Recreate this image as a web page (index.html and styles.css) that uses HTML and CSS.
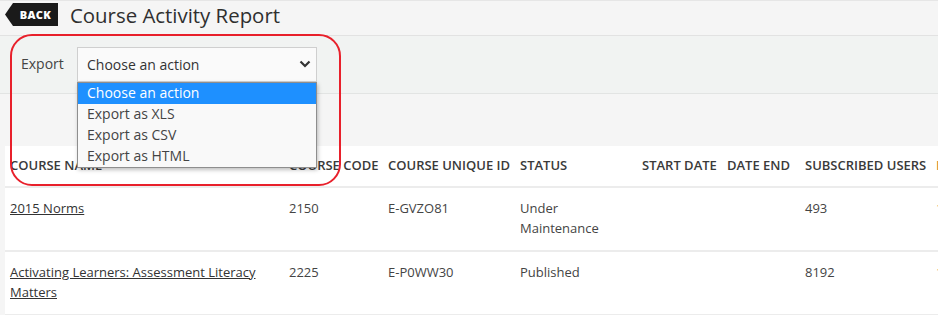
FILE: index.html
```html
<!DOCTYPE html>
<html>
<head>
<meta charset="utf-8">
<link rel="stylesheet" href="styles.css">
</head>
<body>
<div class="page">
  <header class="topbar">
    <a class="back">BACK</a>
    <h1 class="title">Course Activity Report</h1>
  </header>
  <div class="filters">
    <label class="flabel">Export</label>
    <div class="select">
      <span>Choose an action</span>
      <svg class="chev" width="12" height="8" viewBox="0 0 12 8"><path d="M1.5 1.5 L6 6 L10.5 1.5" fill="none" stroke="#333" stroke-width="2.2"/></svg>
      <ul class="menu">
        <li class="active">Choose an action</li>
        <li>Export as XLS</li>
        <li>Export as CSV</li>
        <li>Export as HTML</li>
      </ul>
    </div>
  </div>
  <div class="spacer"></div>
  <div class="card">
    <table class="report">
      <colgroup>
        <col class="c1"><col class="c2"><col class="c3"><col class="c4"><col class="c5"><col class="c6"><col class="c7"><col class="c8">
      </colgroup>
      <thead>
        <tr><th>Course Name</th><th>Course Code</th><th>Course Unique ID</th><th>Status</th><th>Start Date</th><th>Date End</th><th>Subscribed Users</th><th class="cut">Progress</th></tr>
      </thead>
      <tbody>
        <tr><td><a href="#">2015 Norms</a></td><td>2150</td><td>E-GVZO81</td><td>Under Maintenance</td><td></td><td></td><td>493</td><td class="cut">1</td></tr>
        <tr><td><a href="#">Activating Learners: Assessment Literacy Matters</a></td><td>2225</td><td>E-P0WW30</td><td>Published</td><td></td><td></td><td>8192</td><td class="cut">1</td></tr>
      </tbody>
    </table>
  </div>
  <div class="highlight"></div>
</div>
</body>
</html>
```

FILE: styles.css
```css
html, body {
  margin: 0;
  padding: 0;
  background: #f5f5f5;
  overflow: hidden;
  font-family: "Open Sans", "Noto Sans", sans-serif;
  color: #333;
}
.page {
  position: relative;
  width: 938px;
  height: 315px;
}
.topbar {
  border-top: 1px solid #e6e6e6;
  border-bottom: 1px solid #e2e2e2;
  display: flex;
  align-items: flex-start;
  box-sizing: border-box;
  height: 36px;
  padding-top: 2px;
}
.back {
  margin-left: 5px;
  width: 53px;
  height: 23px;
  background: #1a1a1a;
  color: #fff;
  font-weight: 800;
  font-size: 11px;
  letter-spacing: 0.3px;
  display: flex;
  align-items: center;
  justify-content: flex-end;
  padding-right: 7px;
  box-sizing: border-box;
  clip-path: polygon(8px 0, 100% 0, 100% 100%, 8px 100%, 0 50%);
}
.title {
  margin: -1px 0 0 12px;
  font-size: 20.4px;
  font-weight: 400;
  line-height: 26px;
  color: #2f2f2f;
}
.filters {
  background: #f1f3f2;
  border-bottom: 1px solid #e2e4e3;
  display: flex;
  align-items: flex-start;
  padding-top: 11px;
  box-sizing: border-box;
  height: 58px;
}
.flabel {
  margin-left: 21px;
  margin-top: 7px;
  font-size: 14px;
  color: #444;
  width: 56px;
}
.select {
  position: relative;
  width: 240px;
  height: 35px;
  box-sizing: border-box;
  border: 1px solid #cfcfcf;
  background: #fafafa;
  display: flex;
  align-items: center;
  padding-left: 9px;
  padding-bottom: 1px;
  font-size: 14px;
  color: #333;
}
.chev {
  position: absolute;
  right: 5px;
  top: 12px;
}
.menu {
  position: absolute;
  left: -1px;
  top: 34px;
  width: 240px;
  margin: 0;
  padding: 0;
  list-style: none;
  background: #f9f9f9;
  border: 1px solid #8e8e8e;
  box-sizing: border-box;
  box-shadow: 1px 2px 4px rgba(0,0,0,0.25);
  z-index: 2;
}
.menu li {
  height: 21px;
  line-height: 20px;
  padding-left: 9px;
  font-size: 14px;
  color: #444;
}
.menu li.active {
  background: #1e90ff;
  color: #fff;
}
.spacer {
  height: 52px;
}
.card {
  margin-left: 5px;
  background: #fff;
  height: 180px;
  overflow: hidden;
}
.report {
  table-layout: fixed;
  border-collapse: collapse;
  width: 1040px;
  font-size: 13px;
}
.c1 { width: 279px; }
.c2 { width: 99px; }
.c3 { width: 132px; }
.c4 { width: 122px; }
.c5 { width: 85px; }
.c6 { width: 78px; }
.c7 { width: 131px; }
.c8 { width: 114px; }
.report th {
  text-align: left;
  text-transform: uppercase;
  font-weight: 600;
  color: #3a3a3a;
  height: 38px;
  padding: 0 5px 2px;
  vertical-align: middle;
  border-bottom: 2px solid #ececec;
  white-space: nowrap;
}
.report td {
  vertical-align: top;
  padding: 10px 5px 11px;
  line-height: 20px;
  height: 41px;
  color: #444;
  border-bottom: 2px solid #ececec;
}
.report td a {
  color: #333;
  text-decoration: underline;
}
.report .cut {
  color: #d08a40;
}
.highlight {
  position: absolute;
  left: 10px;
  top: 34px;
  width: 331px;
  height: 152px;
  box-sizing: border-box;
  border: 2px solid #e8202b;
  border-radius: 22px;
  z-index: 3;
  pointer-events: none;
}
```
